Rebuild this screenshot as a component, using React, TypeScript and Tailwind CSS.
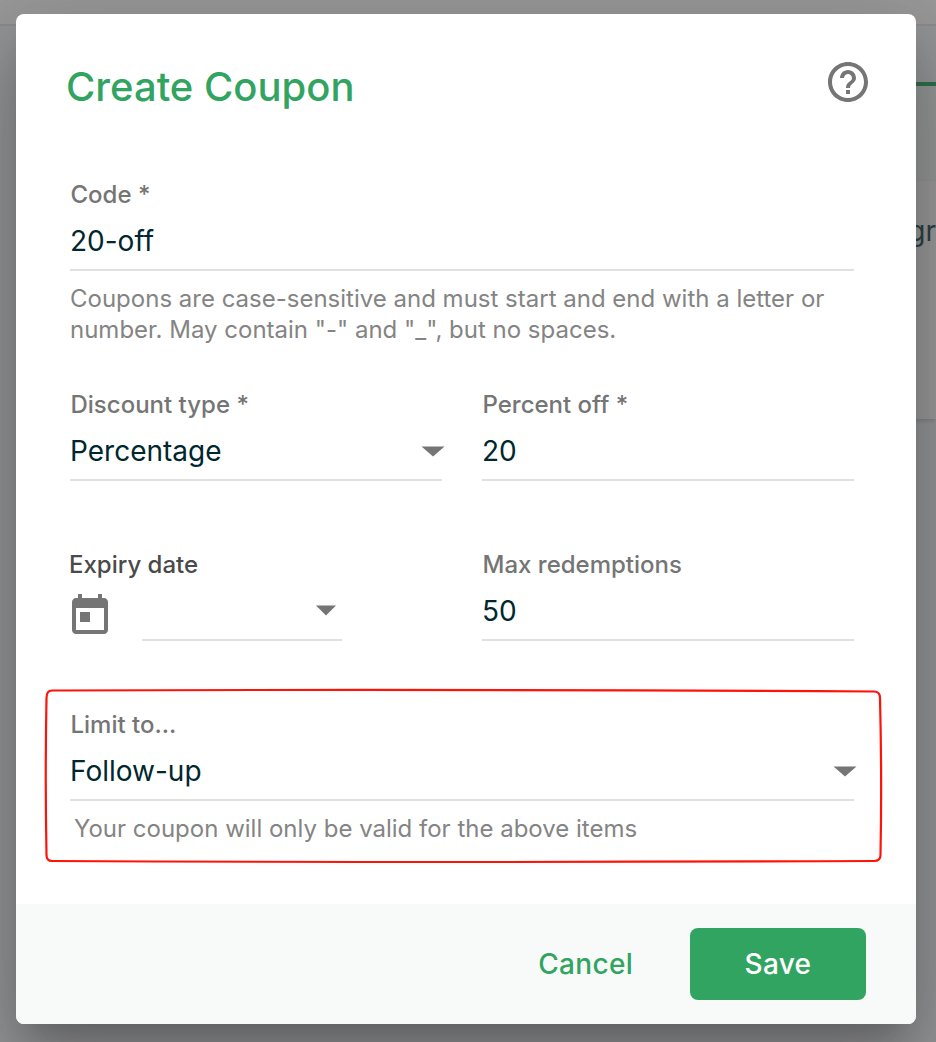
import type { ReactNode } from "react";

function Caret({ small = false }: { small?: boolean }) {
  return small ? (
    <svg className="mt-px mr-[6px] h-[11px] w-5 shrink-0" viewBox="0 0 20 11" fill="#757575">
      <path d="M0 0.5h20l-10 10z" />
    </svg>
  ) : (
    <svg className="-mr-[3px] h-[11px] w-6 shrink-0" viewBox="0 0 24 11" fill="#757575">
      <path d="M0.500 0.500h23l-11.500 10z" />
    </svg>
  );
}

type FieldProps = { label: string; value: string; trailing?: ReactNode };

function Field({ label, value, trailing }: FieldProps) {
  return (
    <div className="flex h-[92px] min-w-0 flex-1 flex-col">
      <label className="h-[31px] pl-[0.5px] text-2xl leading-[31px] font-medium text-[#757575]">
        {label}
      </label>
      <div className="flex h-[61px] items-center justify-between border-b-2 border-[#e0e0e0] pt-[3px] text-[28px] text-[#00272e]">
        <span>{value}</span>
        {trailing}
      </div>
    </div>
  );
}

function Backdrop() {
  return (
    <div className="flex h-full flex-col bg-[#949597]">
      <div className="h-[26px] shrink-0 border-b-2 border-[#8c8c8c] bg-[#999999]" />
      <div className="ml-[468px] flex flex-col">
        <div className="h-[60px] shrink-0 border-b-4 border-[#2e704b]" />
        <div className="h-[95px] shrink-0 bg-[#959796]" />
        <div className="flex h-[238px] shrink-0 justify-end bg-[#999999] pt-[30px] shadow-[0_2px_4px_rgba(0,0,0,0.14)]">
          <span className="text-[28px] leading-10 text-[#2d4146]">gr</span>
        </div>
      </div>
    </div>
  );
}

export default function App() {
  return (
    <div className="relative h-[1042px] w-[936px] overflow-hidden font-['Inter',sans-serif]">
      <Backdrop />
      <div
        role="dialog"
        className="absolute top-[14px] left-4 flex h-[1010px] w-[900px] flex-col overflow-hidden rounded-lg bg-white shadow-[0_22px_30px_-14px_rgba(0,0,0,0.2),0_48px_76px_6px_rgba(0,0,0,0.14),0_18px_92px_16px_rgba(0,0,0,0.12)]"
      >
        <header className="flex h-[165px] items-start justify-between pt-[44px] pr-11 pl-[50px]">
          <h1 className="text-[40px] leading-[57px] font-medium text-[#32a462]">
            Create Coupon
          </h1>
          <svg className="h-12 w-12" viewBox="0 0 24 24" fill="#757575">
            <path d="M11 18h2v-2h-2v2zm1-16C6.48 2 2 6.48 2 12s4.480 10 10 10 10-4.480 10-10S17.520 2 12 2zm0 18c-4.410 0-8-3.590-8-8s3.590-8 8-8 8 3.590 8 8-3.590 8-8 8zm0-14c-2.210 0-4 1.790-4 4h2c0-1.100.9-2 2-2s2 .9 2 2c0 2-3 1.750-3 5h2c0-2.250 3-2.500 3-5 0-2.210-1.790-4-4-4z" />
          </svg>
        </header>

        <main className="flex flex-1 flex-col pr-[62px] pl-[54px]">
          <div className="flex">
            <Field label="Code *" value="20-off" />
          </div>
          <p className="mt-3 h-[106px] text-2xl leading-[31px] whitespace-nowrap text-[#848484]">
            Coupons are case-sensitive and must start and end with a letter or
            <br />
            number. May contain "-" and "_", but no spaces.
          </p>
          <div className="flex gap-10">
            <Field label="Discount type *" value="Percentage" trailing={<Caret />} />
            <Field label="Percent off *" value="20" />
          </div>
          <div className="mt-[68px] flex gap-10">
            <div className="h-[92px] flex-1">
              <div className="-ml-px text-2xl leading-[31px] font-medium text-[#4a4a4a]">
                Expiry date
              </div>
              <div className="flex h-[61px]">
                <svg className="mt-3 -ml-1 h-12 w-12" viewBox="0 0 24 24" fill="#757575">
                  <path d="M19 3h-1V1h-2v2H8V1H6v2H5c-1.110 0-1.990.9-1.990 2L3 19c0 1.100.89 2 2 2h14c1.100 0 2-.9 2-2V5c0-1.100-.9-2-2-2zm0 16H5V8h14v11zM7 10h5v5H7z" />
                </svg>
                <div className="ml-7 flex w-[200px] items-center justify-end border-b-2 border-[#e0e0e0]">
                  <Caret small />
                </div>
              </div>
            </div>
            <Field label="Max redemptions" value="50" />
          </div>
          <div className="relative mt-[68px]">
            <Field label="Limit to..." value="Follow-up" trailing={<Caret />} />
            <p className="mt-3 ml-1 text-2xl leading-[31px] text-[#848484]">
              Your coupon will only be valid for the above items
            </p>
            <svg
              className="pointer-events-none absolute -top-[21px] -left-[26px] h-[176px] w-[840px]"
              viewBox="0 0 840 176"
              fill="none"
              stroke="#ff1208"
              strokeWidth="2.2"
            >
              <path d="M8 2.500Q420 1 830 3.500Q836 3.500 836 10Q838 90 836.500 167Q836.500 173 830 173Q420 175 8 173Q2.500 173 2.500 167Q1 90 2.500 10Q2.500 2.500 8 2.500Z" />
            </svg>
          </div>
        </main>

        <footer className="flex h-[120px] items-center justify-end bg-[#f8faf9] pr-[50px]">
          <button className="mr-[57px] text-[28px] leading-10 font-medium tracking-[0.3px] text-[#32a462]">
            Cancel
          </button>
          <button className="h-[72px] w-[176px] rounded-lg bg-[#32a462] text-[28px] font-medium tracking-[0.3px] text-white">
            Save
          </button>
        </footer>
      </div>
    </div>
  );
}
